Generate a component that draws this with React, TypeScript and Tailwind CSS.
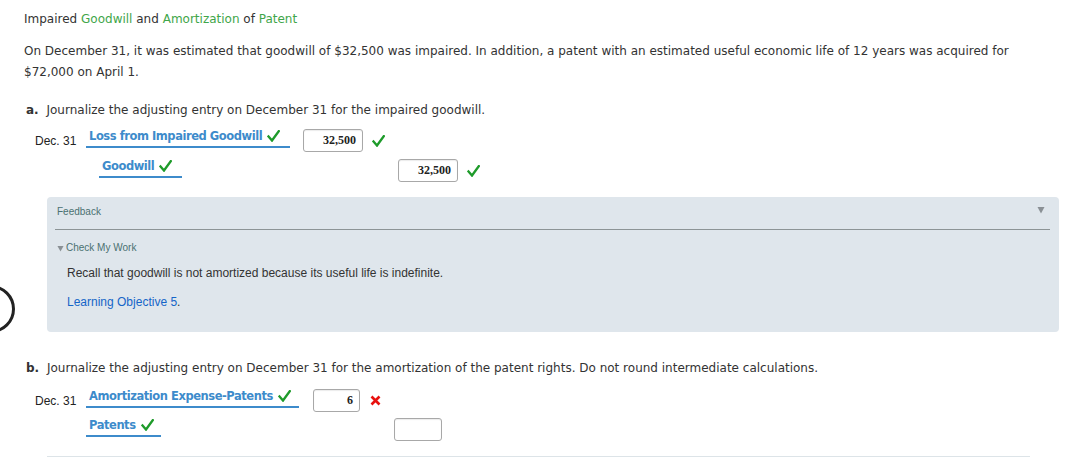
import React from 'react';

const verdana = { fontFamily: '"DejaVu Sans", Verdana, sans-serif' };
const arial = { fontFamily: '"Liberation Sans", Arial, sans-serif' };
const times = { fontFamily: '"Liberation Serif", "Times New Roman", serif' };

function Check() {
  return (
    <svg width="13" height="12" viewBox="0 0 13 12" className="shrink-0">
      <path d="M1.5 6.5 L5 10.5 L11.8 1.2" fill="none" stroke="#1e9b2a" strokeWidth="2.4" strokeLinecap="square" />
    </svg>
  );
}

function Cross() {
  return (
    <svg width="11" height="11" viewBox="0 0 11 11" className="shrink-0">
      <path d="M1.5 1.5 L9.5 9.5 M9.5 1.5 L1.5 9.5" fill="none" stroke="#e8110f" strokeWidth="2.6" />
    </svg>
  );
}

function Tri({ size }: { size: number }) {
  return (
    <svg width={size} height={size} viewBox="0 0 8 8" className="shrink-0">
      <path d="M0.5 1 L7.5 1 L4 7.5 Z" fill="#8a9095" />
    </svg>
  );
}

function Account({ label, width, indent }: { label: string; width: number; indent?: number }) {
  return (
    <div
      style={{ width, marginLeft: indent ?? 0 }}
      className="shrink-0 border-b-2 border-[#3d8bcb] pl-[3px] pb-[3px] flex items-center gap-[5px] whitespace-nowrap"
    >
      <span style={verdana} className="text-[11.5px] leading-[14px] font-bold text-[#3d8bcb] tracking-[-0.45px]">
        {label}
      </span>
      <Check />
    </div>
  );
}

function Amount({ value, width }: { value: string; width: number }) {
  return (
    <div
      style={{ ...times, width }}
      className="shrink-0 h-[23px] border border-[#a8a8a8] rounded-[3px] bg-white text-right pr-[6px] text-[12px] font-bold leading-[21px] text-[#222] shadow-[inset_0_1px_1px_rgba(0,0,0,0.08)]"
    >
      {value}
    </div>
  );
}

function DateCell({ show }: { show: boolean }) {
  return (
    <div style={arial} className="w-[51px] shrink-0 pt-[5px] text-[12px] leading-[14px] text-[#222]">
      {show ? 'Dec. 31' : ''}
    </div>
  );
}

export default function App() {
  return (
    <div className="relative w-full h-[458px] overflow-hidden bg-white pl-[24px] pt-[11px] text-[#333]">
      {/* left edge circle (cursor ring) */}
      <div className="absolute left-[-33px] top-[285px] w-[48px] h-[48px] rounded-full border-[3px] border-[#222]" />

      <p style={verdana} className="text-[12px] leading-[17px]">
        Impaired <span className="text-[#3fa64a]">Goodwill</span> and{' '}
        <span className="text-[#3fa64a]">Amortization</span> of <span className="text-[#3fa64a]">Patent</span>
      </p>

      <p style={verdana} className="mt-[13px] text-[12px] leading-[21px] pr-[40px]">
        On December 31, it was estimated that goodwill of $32,500 was impaired. In addition, a patent with an estimated useful economic life of 12 years was acquired for $72,000 on April 1.
      </p>

      {/* part a */}
      <p style={verdana} className="mt-[19px] text-[12px] leading-[17px] pl-[2px]">
        <span className="font-bold mr-[4px]">a.</span> Journalize the adjusting entry on December 31 for the impaired goodwill.
      </p>

      <div className="mt-[10px] pl-[11px] flex flex-col gap-[7px]">
        <div className="flex items-start h-[23px]">
          <DateCell show />
          <Account label="Loss from Impaired Goodwill" width={204} />
          <div className="ml-[13px] flex items-center gap-[9px]">
            <Amount value="32,500" width={60} />
            <Check />
          </div>
        </div>
        <div className="flex items-start h-[23px]">
          <DateCell show={false} />
          <Account label="Goodwill" width={83} indent={13} />
          <div className="ml-[216px] flex items-center gap-[9px]">
            <Amount value="32,500" width={60} />
            <Check />
          </div>
        </div>
      </div>

      {/* feedback */}
      <div className="mt-[15px] ml-[23px] mr-[7px] rounded-[4px] bg-[#dfe6ec] pl-[8px] pr-[9px] pt-[8px] pb-[22px]">
        <div className="flex items-center justify-between">
          <span style={arial} className="pl-[2px] text-[10px] leading-[14px] text-[#4b7171]">Feedback</span>
          <span className="mr-[5px] mt-[-4px]">
            <Tri size={8} />
          </span>
        </div>
        <div className="mt-[10px] h-px bg-[#8c9496]" />
        <div style={arial} className="mt-[11px] pl-[2px] flex items-center gap-[2px] text-[10px] leading-[14px] text-[#4b7171]">
          <Tri size={7} />
          <span>Check My Work</span>
        </div>
        <p style={arial} className="mt-[10px] pl-[12px] text-[12px] leading-[16px] text-[#333]">
          Recall that goodwill is not amortized because its useful life is indefinite.
        </p>
        <p style={arial} className="mt-[13px] pl-[12px] text-[12px] leading-[16px] text-[#333]">
          <span className="text-[#1565c8]">Learning Objective 5</span>.
        </p>
      </div>

      {/* part b */}
      <p style={verdana} className="mt-[28px] text-[12px] leading-[17px] pl-[2px]">
        <span className="font-bold mr-[4px]">b.</span> Journalize the adjusting entry on December 31 for the amortization of the patent rights. Do not round intermediate calculations.
      </p>

      <div className="mt-[12px] pl-[11px] flex flex-col gap-[6px]">
        <div className="flex items-start h-[23px]">
          <DateCell show />
          <Account label="Amortization Expense-Patents" width={213} />
          <div className="ml-[14px] flex items-center gap-[10px]">
            <Amount value="6" width={47} />
            <Cross />
          </div>
        </div>
        <div className="flex items-start h-[23px]">
          <DateCell show={false} />
          <Account label="Patents" width={75} />
          <div className="ml-[233px] flex items-center">
            <Amount value="" width={48} />
          </div>
        </div>
      </div>

      <div className="absolute left-[47px] right-[36px] top-[456px] h-px bg-[#dde4e8]" />
    </div>
  );
}
